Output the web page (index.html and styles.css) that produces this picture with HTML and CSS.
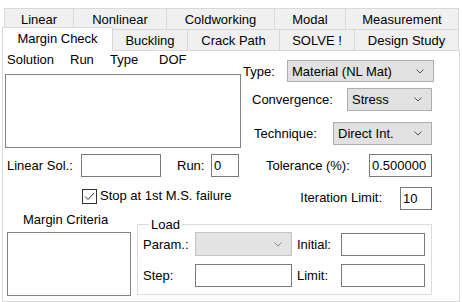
FILE: index.html
```html
<!DOCTYPE html>
<html>
<head>
<meta charset="utf-8">
<link rel="stylesheet" href="styles.css">
</head>
<body>
<div class="tabs">
  <div class="tabrow">
    <div class="tab t-linear">Linear</div>
    <div class="tab t-nonlinear">Nonlinear</div>
    <div class="tab t-cold">Coldworking</div>
    <div class="tab t-modal">Modal</div>
    <div class="tab t-meas last">Measurement</div>
  </div>
  <div class="tabrow">
    <div class="tab active">Margin Check</div>
    <div class="tab t-buck">Buckling</div>
    <div class="tab t-crack">Crack Path</div>
    <div class="tab t-solve">SOLVE !</div>
    <div class="tab t-design last">Design Study</div>
  </div>
</div>
<div class="panel">
  <div class="top">
    <div class="left">
      <div class="cols">
        <span class="col-sol">Solution</span>
        <span class="col-run">Run</span>
        <span class="col-type">Type</span>
        <span>DOF</span>
      </div>
      <div class="listbox sol-list"></div>
      <div class="row lin-row">
        <span class="lbl l-lin">Linear Sol.:</span>
        <div class="input i-lin"></div>
        <span class="lbl l-run">Run:</span>
        <div class="input i-run">0</div>
      </div>
    </div>
    <div class="right">
      <div class="row r-type">
        <span class="lbl">Type:</span>
        <div class="combo c-type"><span>Material (NL Mat)</span><svg class="chev" width="8" height="5" viewBox="0 0 8 5"><polyline points="0.5,0.5 4,4 7.5,0.5"/></svg></div>
      </div>
      <div class="row r-conv">
        <span class="lbl">Convergence:</span>
        <div class="combo c-conv"><span>Stress</span><svg class="chev" width="8" height="5" viewBox="0 0 8 5"><polyline points="0.5,0.5 4,4 7.5,0.5"/></svg></div>
      </div>
      <div class="row r-tech">
        <span class="lbl">Technique:</span>
        <div class="combo c-tech"><span>Direct Int.</span><svg class="chev" width="8" height="5" viewBox="0 0 8 5"><polyline points="0.5,0.5 4,4 7.5,0.5"/></svg></div>
      </div>
      <div class="row r-tol">
        <span class="lbl">Tolerance (%):</span>
        <div class="input i-tol">0.500000</div>
      </div>
    </div>
  </div>
  <div class="mid">
    <div class="chk"><svg width="15" height="15" viewBox="0 0 15 15"><polyline points="3,7.5 6,10.5 12,4"/></svg></div>
    <span class="chk-lbl">Stop at 1st M.S. failure</span>
    <div class="iter">
      <span class="lbl l-iter">Iteration Limit:</span>
      <div class="input i-iter">10</div>
    </div>
  </div>
  <div class="bottom">
    <div class="mc">
      <div class="mc-lbl">Margin Criteria</div>
      <div class="listbox mc-list"></div>
    </div>
    <fieldset class="load">
      <legend>Load</legend>
      <div class="lrow lrow1">
        <span class="lbl l-left">Param.:</span>
        <div class="combo c-param disabled"><span></span><svg class="chev" width="8" height="5" viewBox="0 0 8 5"><polyline points="0.5,0.5 4,4 7.5,0.5"/></svg></div>
        <span class="lbl l-right">Initial:</span>
        <div class="input i-load"></div>
      </div>
      <div class="lrow lrow2">
        <span class="lbl l-left">Step:</span>
        <div class="input i-step"></div>
        <span class="lbl l-right">Limit:</span>
        <div class="input i-load"></div>
      </div>
    </fieldset>
  </div>
</div>
</body>
</html>
```
FILE: styles.css
```css
* { box-sizing: border-box; }
html, body { margin: 0; padding: 0; background: #ffffff; }
body {
  font-family: "Liberation Sans", Arial, sans-serif;
  font-size: 13px;
  line-height: 15px;
  color: #000;
  width: 462px;
  height: 302px;
  overflow: hidden;
}

/* tabs */
.tabs { padding-top: 8px; }
.tabrow {
  display: flex;
  align-items: flex-start;
  margin-left: 4px;
  height: 21px;
}
.tab {
  height: 21px;
  border-top: 1px solid #d9d9d9;
  border-left: 1px solid #d9d9d9;
  background: #f0f0f0;
  text-align: center;
  padding-top: 3px;
  white-space: nowrap;
}
.tab.last { border-right: 1px solid #d9d9d9; }
.t-linear { width: 69px; }
.t-nonlinear { width: 93px; }
.t-cold { width: 108px; }
.t-modal { width: 71px; }
.t-meas { width: 114px; }
.t-buck { width: 75px; }
.t-crack { width: 92px; }
.t-solve { width: 75px; }
.t-design { width: 105px; }
.tab.active {
  width: 111px;
  height: 24px;
  margin: -2px -1px 0 -2px;
  background: #ffffff;
  border-right: 1px solid #d9d9d9;
  position: relative;
  z-index: 1;
  padding-top: 3px;
}

/* panel */
.panel {
  margin-left: 2px;
  width: 458px;
  height: 252px;
  border: 1px solid #d9d9d9;
  background: #ffffff;
}
.top { display: flex; }
.left { width: 238px; padding-left: 2px; }
.right { flex: 1; }

.cols { display: flex; height: 23px; padding-top: 1px; padding-left: 2px; }
.col-sol { width: 63px; }
.col-run { width: 40px; }
.col-type { width: 49px; }

.listbox { border: 1px solid #828282; background: #fff; }
.sol-list { width: 236px; height: 74px; }

.row { display: flex; align-items: center; height: 23px; }
.lbl { white-space: nowrap; }
.lin-row { margin-top: 6px; }
.l-lin { margin-left: 2px; width: 74px; }
.l-run { margin-left: 16px; width: 34px; }

.input {
  height: 23px;
  border: 1px solid #7a7a7a;
  background: #fff;
  padding: 3px 0 0 2px;
  white-space: nowrap;
}
.i-lin { width: 80px; }
.i-run { width: 28px; }

.right .row { padding-right: 27px; }
.right .row .combo, .right .row .input { margin-left: auto; }
.r-type { margin-top: 9px; height: 22px; padding-right: 25px !important; }
.r-type .lbl { margin-left: 2px; }
.r-conv { margin-top: 6px; }
.r-conv .lbl { margin-left: 11px; }
.r-tech { margin-top: 11px; }
.r-tech .lbl { margin-left: 13px; }
.r-tol { margin-top: 9px; }
.r-tol .lbl { margin-left: 25px; }

.combo {
  display: flex;
  align-items: center;
  justify-content: space-between;
  height: 23px;
  border: 1px solid #adadad;
  background: #e1e1e1;
  padding: 0 9px 0 4px;
  white-space: nowrap;
}
.chev { flex: none; }
.chev polyline { fill: none; stroke: #4d4d4d; stroke-width: 1; }
.c-type { width: 147px; height: 22px; }
.c-conv { width: 85px; }
.c-tech { width: 99px; }
.i-tol { width: 63px; }

.combo.disabled { background: #e3e3e3; border-color: #c4c4c4; }
.combo.disabled .chev polyline { stroke: #8c8c8c; }

/* middle row */
.mid { display: flex; align-items: flex-start; height: 23px; margin-top: 10px; }
.chk {
  margin-left: 79px;
  margin-top: 2px;
  width: 15px;
  height: 15px;
  border: 1px solid #333333;
  background: #fff;
  flex: none;
}
.chk svg { display: block; margin: -1px; }
.chk polyline { fill: none; stroke: #333333; stroke-width: 1; }
.chk-lbl { margin-left: 3px; margin-top: 1px; white-space: nowrap; }
.iter { margin-left: auto; margin-right: 27px; display: flex; align-items: center; height: 23px; }
.l-iter { margin-right: 18px; margin-top: -2px; }
.i-iter { width: 32px; }

/* bottom */
.bottom { display: flex; align-items: flex-start; margin-top: 2px; }
.mc { margin-left: 4px; width: 124px; }
.mc-lbl { height: 20px; padding-left: 16px; white-space: nowrap; }
.mc-list { width: 124px; height: 64px; }

.load {
  margin: 5px 0 0 6px;
  width: 295px;
  border: 1px solid #dcdcdc;
  padding: 0 6px 7px 5px;
  min-inline-size: 0;
}
.load legend {
  margin-left: 6px;
  padding: 0 2px;
  line-height: 15px;
}
.lrow { display: flex; align-items: center; height: 24px; }
.lrow2 { margin-top: 8px; height: 23px; }
.l-left { width: 52px; }
.l-right { margin-left: 5px; width: 44px; }
.c-param { width: 97px; height: 24px; }
.i-step { width: 97px; }
.i-load { width: 84px; }
```
